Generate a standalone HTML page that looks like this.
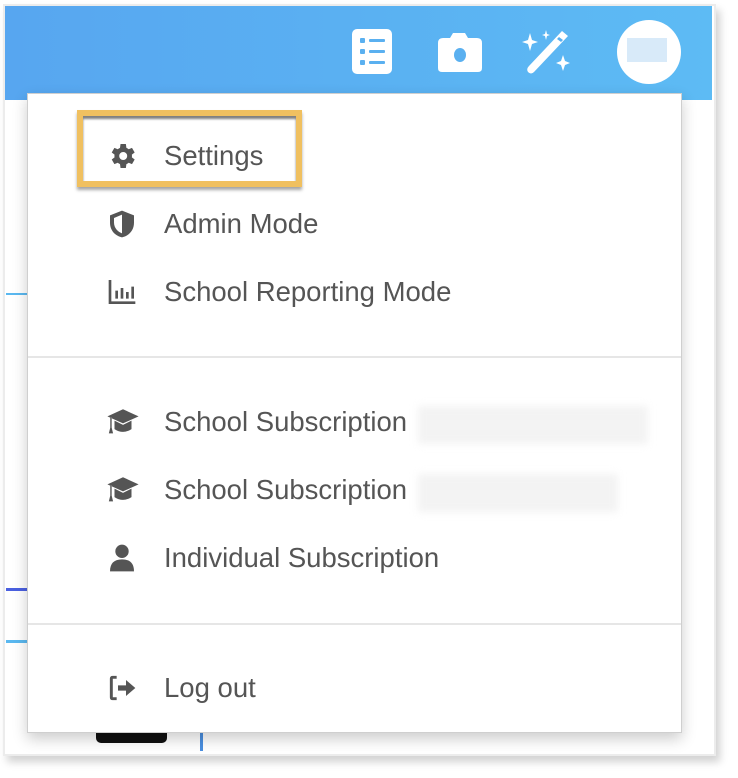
<!DOCTYPE html>
<html><head><style>
body{margin:0;width:738px;height:778px;background:#fff;position:relative;overflow:hidden;font-family:"Liberation Sans",sans-serif}
.frame{position:absolute;left:3px;top:4px;width:709px;height:748px;background:#fff;border:2px solid #ececec;box-shadow:4px 6px 8px rgba(0,0,0,.18)}
.hdr{position:absolute;left:5px;top:6px;width:707px;height:94px;background:linear-gradient(90deg,#57a6f0,#5dbbf4)}
.menu{position:absolute;left:27px;top:93px;width:653px;height:638px;background:#fff;border:1px solid #cfcfcf;box-shadow:0 6px 14px rgba(0,0,0,.2)}
.item{position:absolute;left:0;height:40px;font-size:27.5px;color:#555;line-height:40px}
.item span{position:absolute;left:136px;white-space:nowrap}
.item svg{position:absolute;left:78px;top:4px}
.div{position:absolute;left:0;width:653px;height:2px;background:#e6e6e6}
</style></head><body>
<div class="frame"></div>
<div class="hdr"></div>
<div style="position:absolute;left:6px;top:293px;width:22px;height:2px;background:#5ab8f0"></div>
<div style="position:absolute;left:6px;top:588px;width:22px;height:3px;background:#4a60e0"></div>
<div style="position:absolute;left:6px;top:640px;width:22px;height:3px;background:#5ab8f0"></div>
<div style="position:absolute;left:96px;top:720px;width:71px;height:23px;background:#111;border-radius:5px"></div>
<div style="position:absolute;left:200px;top:720px;width:3px;height:31px;background:#4a8fe0"></div>
<!-- header icons -->
<svg style="position:absolute;left:350px;top:28px" width="44" height="48" viewBox="0 0 44 48"><rect x="2" y="1" width="40" height="45" rx="5" fill="#fff"/><g fill="#5ab0f0"><rect x="10" y="10" width="5" height="5" rx="1"/><rect x="10" y="21" width="5" height="5" rx="1"/><rect x="10" y="32" width="5" height="5" rx="1"/><rect x="19" y="11" width="16" height="3" rx="1"/><rect x="19" y="22" width="16" height="3" rx="1"/><rect x="19" y="33" width="16" height="3" rx="1"/></g></svg>
<svg style="position:absolute;left:436px;top:30px" width="48" height="44" viewBox="0 0 48 44"><path d="M14 8 L17 3 H29 L32 8 H41 Q46 8 46 13 V38 Q46 42 42 42 H6 Q2 42 2 38 V13 Q2 8 7 8Z" fill="#fff"/><ellipse cx="24" cy="25" rx="6" ry="7" fill="#5ab0f0"/></svg>
<svg style="position:absolute;left:518px;top:28px" width="52" height="48" viewBox="0 0 52 48"><path d="M44 3 L50 8 L16 44 Q13 47 10 44 Q8 41 11 38Z" fill="#fff"/><path d="M41 9 L45 12 L43 14 L39 11Z" fill="#5ab0f0"/><path d="M12 5 L14 12 L20 14 L14 16 L12 23 L10 16 L4 14 L10 12Z M28 2 L29 6 L32 7 L29 8 L28 12 L27 8 L24 7 L27 6Z M45 27 L47 33 L52 35 L47 37 L45 43 L43 37 L38 35 L43 33Z" fill="#fff"/></svg>
<div style="position:absolute;left:617px;top:20px;width:64px;height:64px;border-radius:50%;background:#fff"></div>
<div style="position:absolute;left:627px;top:38px;width:40px;height:24px;background:#d8eaf9"></div>
<div class="menu">
 <div style="position:absolute;left:49px;top:16px;width:225px;height:77px;border:6px solid #f0c060;box-sizing:border-box;box-shadow:0 3px 3px rgba(0,0,0,.35), inset 0 3px 2px rgba(0,0,0,.5)"></div>
 <div class="item" style="top:42px"><svg width="32" height="32" viewBox="0 0 24 24"><path fill="#555" d="M19.4 13a7.5 7.5 0 0 0 0-2l2.1-1.6-2-3.5-2.5 1a7 7 0 0 0-1.7-1L14.9 3h-4l-.4 2.9a7 7 0 0 0-1.7 1l-2.5-1-2 3.5L6.4 11a7.5 7.5 0 0 0 0 2l-2.1 1.6 2 3.5 2.5-1a7 7 0 0 0 1.7 1l.4 2.9h4l.4-2.9a7 7 0 0 0 1.7-1l2.5 1 2-3.5zM12.9 15a3 3 0 1 1 0-6 3 3 0 0 1 0 6z"/></svg><span>Settings</span></div>
 <div class="item" style="top:110px"><svg width="32" height="32" viewBox="0 0 24 24"><path fill="#555" d="M12 2 L3 5.5 V11 C3 17 7 21 12 22 C17 21 21 17 21 11 V5.5Z M12 5 V19 C9 18 6 15 6 11 V7.5Z"/></svg><span>Admin Mode</span></div>
 <div class="item" style="top:178px"><svg width="32" height="32" viewBox="0 0 24 24"><path fill="#555" d="M2 3h2v16h18v2H2z M7 11h2v6H7z M11 9h2v8h-2z M15 12h2v5h-2z M19 8h2v9h-2z"/></svg><span>School Reporting Mode</span></div>
 <div class="div" style="top:262px"></div>
 <div class="item" style="top:308px"><svg width="34" height="32" viewBox="0 0 24 22"><path fill="#555" d="M12 2 L23 7 L12 12 L1 7Z M6 10 L12 13 L18 10 V16 Q12 20 6 16Z M3 8 V15 L2 19 H5 L4 15 V8Z"/></svg><span>School Subscription</span></div>
 <div class="item" style="top:376px"><svg width="34" height="32" viewBox="0 0 24 22"><path fill="#555" d="M12 2 L23 7 L12 12 L1 7Z M6 10 L12 13 L18 10 V16 Q12 20 6 16Z M3 8 V15 L2 19 H5 L4 15 V8Z"/></svg><span>School Subscription</span></div>
 <div style="position:absolute;left:390px;top:312px;width:230px;height:38px;background:#f3f3f3;filter:blur(4px)"></div>
 <div style="position:absolute;left:390px;top:380px;width:200px;height:38px;background:#f3f3f3;filter:blur(4px)"></div>
 <div class="item" style="top:444px"><svg width="32" height="32" viewBox="0 0 24 24"><circle cx="12" cy="7" r="5" fill="#555"/><path fill="#555" d="M3 22 Q3 13 12 13 Q21 13 21 22Z"/></svg><span>Individual Subscription</span></div>
 <div class="div" style="top:529px"></div>
 <div class="item" style="top:574px"><svg width="32" height="32" viewBox="0 0 24 24"><path fill="none" stroke="#555" stroke-width="2.2" d="M8 4H5Q4 4 4 5V19Q4 20 5 20H8"/><path fill="#555" d="M9 10h6V6l7 6-7 6v-4H9z"/></svg><span>Log out</span></div>
</div>
</body></html>
